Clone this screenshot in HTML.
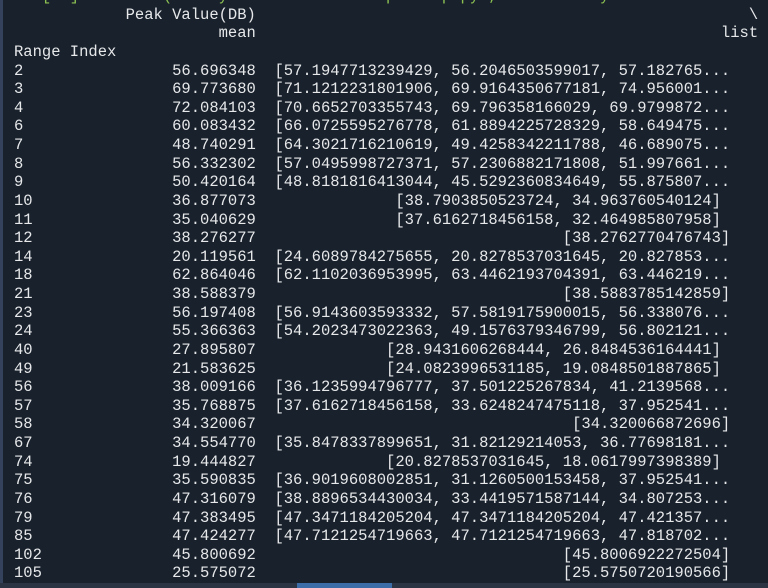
<!DOCTYPE html>
<html><head><meta charset="utf-8"><style>
html,body{margin:0;padding:0;}
body{width:768px;height:588px;overflow:hidden;background:#19212c;position:relative;}
pre{position:absolute;left:14px;top:-13px;margin:0;font-family:"Liberation Mono","DejaVu Sans Mono",monospace;font-size:15.5px;line-height:18.63px;color:#e6e8ea;white-space:pre;}
.g{color:#8cc152;}
.lb{position:absolute;left:0;top:0;width:3px;height:588px;background:#34425c;}
.bb{position:absolute;left:0;top:583px;width:768px;height:5px;background:#2b3442;}
.bs{position:absolute;left:297px;top:583px;width:95px;height:5px;background:#3d6da8;}
</style></head><body>
<div class="lb"></div>
<pre><span class="g">In [20]: runfile('C:/Python/AAA/Testbed/plottop.py', wdir='C:/Python/AAA/Testbed')</span>
            Peak Value(DB)                                                     \
                      mean                                                  list
Range Index                                                                  
2                56.696348  [57.1947713239429, 56.2046503599017, 57.182765...
3                69.773680  [71.1212231801906, 69.9164350677181, 74.956001...
4                72.084103  [70.6652703355743, 69.796358166029, 69.9799872...
6                60.083432  [66.0725595276778, 61.8894225728329, 58.649475...
7                48.740291  [64.3021716210619, 49.4258342211788, 46.689075...
8                56.332302  [57.0495998727371, 57.2306882171808, 51.997661...
9                50.420164  [48.8181816413044, 45.5292360834649, 55.875807...
10               36.877073               [38.7903850523724, 34.963760540124]
11               35.040629               [37.6162718456158, 32.464985807958]
12               38.276277                                 [38.2762770476743]
14               20.119561  [24.6089784275655, 20.8278537031645, 20.827853...
18               62.864046  [62.1102036953995, 63.4462193704391, 63.446219...
21               38.588379                                 [38.5883785142859]
23               56.197408  [56.9143603593332, 57.5819175900015, 56.338076...
24               55.366363  [54.2023473022363, 49.1576379346799, 56.802121...
40               27.895807              [28.9431606268444, 26.8484536164441]
49               21.583625              [24.0823996531185, 19.0848501887865]
56               38.009166  [36.1235994796777, 37.501225267834, 41.2139568...
57               35.768875  [37.6162718456158, 33.6248247475118, 37.952541...
58               34.320067                                  [34.320066872696]
67               34.554770  [35.8478337899651, 31.82129214053, 36.77698181...
74               19.444827              [20.8278537031645, 18.0617997398389]
75               35.590835  [36.9019608002851, 31.1260500153458, 37.952541...
76               47.316079  [38.8896534430034, 33.4419571587144, 34.807253...
79               47.383495  [47.3471184205204, 47.3471184205204, 47.421357...
85               47.424277  [47.7121254719663, 47.7121254719663, 47.818702...
102              45.800692                                 [45.8006922272504]
105              25.575072                                 [25.5750720190566]</pre>
<div class="bb"></div><div class="bs"></div>
</body></html>
